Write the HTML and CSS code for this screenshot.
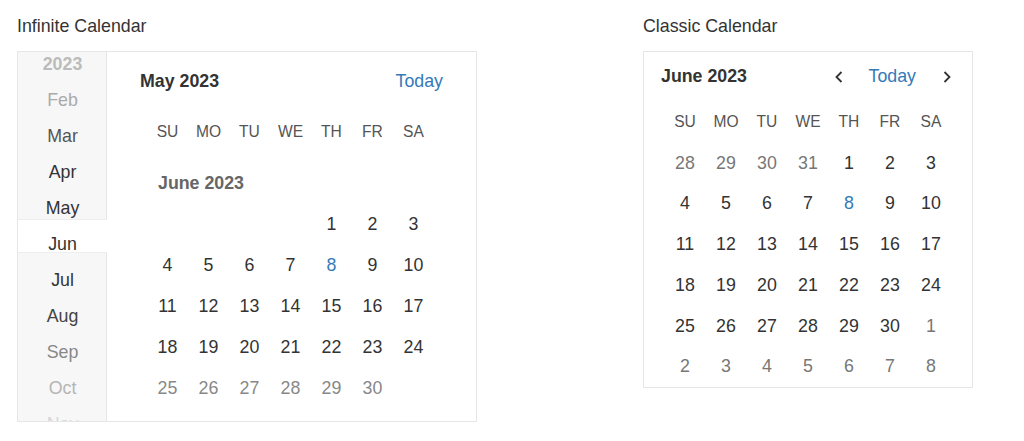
FILE: index.html
```html
<!DOCTYPE html>
<html lang="en">
<head>
    <meta charset="UTF-8">
    <title>Calendars</title>
    <link rel="stylesheet" href="styles.css">
</head>
<body>

<div class="page">

    <div class="demo demo-infinite">
        <div class="demo-title">Infinite Calendar</div>
        <div class="infinite">
            <div class="months">
                <div class="month year">2023</div>
                <div class="month fade-feb">Feb</div>
                <div class="month fade-mar">Mar</div>
                <div class="month">Apr</div>
                <div class="month">May</div>
                <div class="month active">Jun</div>
                <div class="month">Jul</div>
                <div class="month fade-aug">Aug</div>
                <div class="month fade-sep">Sep</div>
                <div class="month fade-oct">Oct</div>
                <div class="month fade-nov">Nov</div>
            </div>
            <div class="scroller">
                <div class="cal-head">
                    <span class="cal-month">May 2023</span>
                    <a class="today">Today</a>
                </div>
                <div class="scroller-body">
                    <div class="weekdays">
                        <span>SU</span><span>MO</span><span>TU</span><span>WE</span><span>TH</span><span>FR</span><span>SA</span>
                    </div>
                    <div class="month-label">June 2023</div>
                    <div class="days">
                        <span class="first-thu">1</span><span>2</span><span>3</span>
                        <span>4</span><span>5</span><span>6</span><span>7</span><span class="is-today">8</span><span>9</span><span>10</span>
                        <span>11</span><span>12</span><span>13</span><span>14</span><span>15</span><span>16</span><span>17</span>
                        <span>18</span><span>19</span><span>20</span><span>21</span><span>22</span><span>23</span><span>24</span>
                        <span class="faded">25</span><span class="faded">26</span><span class="faded">27</span><span class="faded">28</span><span class="faded">29</span><span class="faded">30</span>
                    </div>
                </div>
            </div>
        </div>
    </div>

    <div class="demo demo-classic">
        <div class="demo-title">Classic Calendar</div>
        <div class="classic">
            <div class="classic-head">
                <span class="cal-month">June 2023</span>
                <div class="nav">
                    <a class="arrow">
                        <svg width="8" height="12" viewBox="0 0 8 12"><polyline points="6.5,1 1.5,6 6.5,11" fill="none" stroke="#333" stroke-width="1.8"/></svg>
                    </a>
                    <a class="today">Today</a>
                    <a class="arrow">
                        <svg width="8" height="12" viewBox="0 0 8 12"><polyline points="1.5,1 6.5,6 1.5,11" fill="none" stroke="#333" stroke-width="1.8"/></svg>
                    </a>
                </div>
            </div>
            <div class="classic-grid">
                <div class="weekdays classic-weekdays">
                    <span>SU</span><span>MO</span><span>TU</span><span>WE</span><span>TH</span><span>FR</span><span>SA</span>
                </div>
                <div class="days classic-days">
                    <span class="other">28</span><span class="other">29</span><span class="other">30</span><span class="other">31</span><span>1</span><span>2</span><span>3</span>
                    <span>4</span><span>5</span><span>6</span><span>7</span><span class="is-today">8</span><span>9</span><span>10</span>
                    <span>11</span><span>12</span><span>13</span><span>14</span><span>15</span><span>16</span><span>17</span>
                    <span>18</span><span>19</span><span>20</span><span>21</span><span>22</span><span>23</span><span>24</span>
                    <span>25</span><span>26</span><span>27</span><span>28</span><span>29</span><span>30</span><span class="other">1</span>
                    <span class="other">2</span><span class="other">3</span><span class="other">4</span><span class="other">5</span><span class="other">6</span><span class="other">7</span><span class="other">8</span>
                </div>
            </div>
        </div>
    </div>

</div>

</body>
</html>
```

FILE: styles.css
```css
body {
    margin: 0;
    background: #fff;
    color: #333;
    font-family: "Liberation Sans", Arial, sans-serif;
}

.page {
    display: flex;
    gap: 166px;
    padding: 16px 0 0 17px;
}

.demo-title {
    font-size: 17.8px;
    line-height: 20px;
    margin-bottom: 15px;
    color: #333;
}

a {
    cursor: pointer;
}

.today {
    color: #337ab7;
    font-size: 17.8px;
}

.cal-month {
    font-size: 17.8px;
    font-weight: bold;
    color: #333;
}

/* infinite */

.infinite {
    display: flex;
    width: 460px;
    height: 371px;
    box-sizing: border-box;
    border: 1px solid #e6e6e6;
    overflow: hidden;
}

.months {
    flex: none;
    width: 89px;
    background: #f7f7f7;
    box-shadow: inset -1px 0 #e6e6e6;
    overflow: hidden;
    text-align: center;
}

.month {
    height: 36px;
    line-height: 36px;
    font-size: 17.8px;
    color: #333;
}

.month:first-child {
    margin-top: -6px;
}

.month.year {
    font-weight: bold;
    color: #bbb;
}

.month.active {
    height: 34px;
    box-sizing: border-box;
    margin-top: -7px;
    margin-bottom: 9px;
    padding-top: 6px;
    background: #fff;
    border-top: 1px solid #eee;
    border-bottom: 1px solid #eee;
}

.fade-feb { color: #aaa; }
.fade-mar { color: #555; }
.fade-aug { color: #444; }
.fade-sep { color: #888; }
.fade-oct { color: #b5b5b5; }
.fade-nov { color: #d8d8d8; }

.scroller {
    flex: 1;
}

.cal-head {
    display: flex;
    justify-content: space-between;
    align-items: center;
    height: 59px;
    padding: 0 33px;
}

.scroller-body {
    padding: 0 40px;
}

.weekdays {
    display: grid;
    grid-template-columns: repeat(7, 41px);
    height: 41px;
    line-height: 41px;
    font-size: 15.6px;
    color: #555;
    text-align: center;
}

.month-label {
    height: 41px;
    line-height: 41px;
    padding: 11px 0 0 11px;
    font-size: 17.8px;
    font-weight: bold;
    color: #666;
}

.days {
    display: grid;
    grid-template-columns: repeat(7, 41px);
    grid-auto-rows: 41px;
    line-height: 41px;
    font-size: 17.8px;
    color: #333;
    text-align: center;
}

.days .first-thu {
    grid-column-start: 5;
}

.days .is-today {
    color: #337ab7;
}

.days .faded {
    color: #888;
}

/* classic */

.classic {
    width: 330px;
    height: 337px;
    box-sizing: border-box;
    border: 1px solid #e6e6e6;
}

.classic-head {
    display: flex;
    justify-content: space-between;
    align-items: center;
    height: 49px;
    padding: 0 21px 0 17px;
}

.nav {
    display: flex;
    align-items: center;
    gap: 26px;
}

.nav .today {
    margin-right: 1px;
}

.arrow {
    display: flex;
}

.classic-grid {
    padding: 0 20.5px;
}

.classic-weekdays {
    height: 41.5px;
    line-height: 41.5px;
}

.classic-days {
    grid-auto-rows: 40.8px;
    line-height: 40.8px;
}

.classic-days .other {
    color: #777;
}
```
